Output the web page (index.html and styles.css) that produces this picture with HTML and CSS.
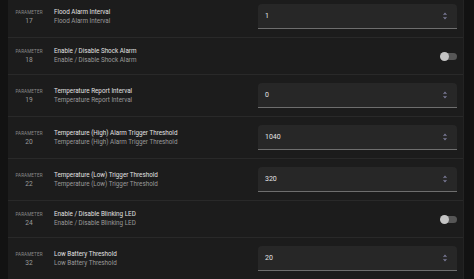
FILE: index.html
```html
<!DOCTYPE html>
<html lang="en">
<head>
  <meta charset="UTF-8" />
  <meta name="viewport" content="width=device-width, initial-scale=1.0" />
  <title>Configuration Parameters</title>
  <link rel="stylesheet" href="styles.css">
</head>
<body>
  <div class="panel">
    <div class="row">
      <div class="param"><span class="param-label">PARAMETER</span><span class="param-num">17</span></div>
      <div class="info"><div class="title">Flood Alarm Interval</div><div class="desc">Flood Alarm Interval</div></div>
      <div class="control">
        <div class="field"><span class="value">1</span>
          <svg class="spin" viewBox="0 0 4 8"><path d="M0.6 3 L2 1.4 L3.4 3 M0.6 5 L2 6.6 L3.4 5" /></svg>
        </div>
      </div>
    </div>
    <div class="row">
      <div class="param"><span class="param-label">PARAMETER</span><span class="param-num">18</span></div>
      <div class="info"><div class="title">Enable / Disable Shock Alarm</div><div class="desc">Enable / Disable Shock Alarm</div></div>
      <div class="control toggle-wrap"><span class="toggle"><span class="knob"></span></span></div>
    </div>
    <div class="row">
      <div class="param"><span class="param-label">PARAMETER</span><span class="param-num">19</span></div>
      <div class="info"><div class="title">Temperature Report Interval</div><div class="desc">Temperature Report Interval</div></div>
      <div class="control">
        <div class="field"><span class="value">0</span>
          <svg class="spin" viewBox="0 0 4 8"><path d="M0.6 3 L2 1.4 L3.4 3 M0.6 5 L2 6.6 L3.4 5" /></svg>
        </div>
      </div>
    </div>
    <div class="row">
      <div class="param"><span class="param-label">PARAMETER</span><span class="param-num">20</span></div>
      <div class="info"><div class="title">Temperature (High) Alarm Trigger Threshold</div><div class="desc">Temperature (High) Alarm Trigger Threshold</div></div>
      <div class="control">
        <div class="field"><span class="value">1040</span>
          <svg class="spin" viewBox="0 0 4 8"><path d="M0.6 3 L2 1.4 L3.4 3 M0.6 5 L2 6.6 L3.4 5" /></svg>
        </div>
      </div>
    </div>
    <div class="row">
      <div class="param"><span class="param-label">PARAMETER</span><span class="param-num">22</span></div>
      <div class="info"><div class="title">Temperature (Low) Trigger Threshold</div><div class="desc">Temperature (Low) Trigger Threshold</div></div>
      <div class="control">
        <div class="field"><span class="value">320</span>
          <svg class="spin" viewBox="0 0 4 8"><path d="M0.6 3 L2 1.4 L3.4 3 M0.6 5 L2 6.6 L3.4 5" /></svg>
        </div>
      </div>
    </div>
    <div class="row">
      <div class="param"><span class="param-label">PARAMETER</span><span class="param-num">24</span></div>
      <div class="info"><div class="title">Enable / Disable Blinking LED</div><div class="desc">Enable / Disable Blinking LED</div></div>
      <div class="control toggle-wrap"><span class="toggle"><span class="knob"></span></span></div>
    </div>
    <div class="row">
      <div class="param"><span class="param-label">PARAMETER</span><span class="param-num">32</span></div>
      <div class="info"><div class="title">Low Battery Threshold</div><div class="desc">Low Battery Threshold</div></div>
      <div class="control">
        <div class="field"><span class="value">20</span>
          <svg class="spin" viewBox="0 0 4 8"><path d="M0.6 3 L2 1.4 L3.4 3 M0.6 5 L2 6.6 L3.4 5" /></svg>
        </div>
      </div>
    </div>
  </div>
</body>
</html>
```

FILE: styles.css
```css
html, body { margin: 0; padding: 0; height: 100%; overflow: hidden; }
body { background: #121212; font-family: Roboto, "Liberation Sans", sans-serif; }
.panel { margin: -4px 10px 0 8px; background: #1c1c1c; border-right: 1px solid #232323; }
.row { display: flex; align-items: center; padding: 9px 0; border-bottom: 1px solid #292929; }
.row:has(.field) { padding: 8px 0; }
.param { width: 42px; display: flex; flex-direction: column; align-items: center; line-height: 9px; }
.param-label { font-size: 4.6px; color: #8a8a8a; letter-spacing: 0.1px; }
.param-num { font-size: 6.6px; color: #9a9a9a; }
.info { flex: 1; margin-left: 4px; line-height: 9px; font-size: 6.3px; }
.title { color: #e2e2e2; }
.desc { color: #9a9a9a; }
.control { width: 199px; margin-right: 6px; display: flex; }
.toggle-wrap { justify-content: flex-end; }
.field { flex: 1; height: 24px; background: #272727; border-bottom: 1px solid #6e6e6e; border-radius: 4px 4px 0 0; display: flex; align-items: center; justify-content: space-between; padding: 0 10px 0 7px; }
.value { font-size: 7px; color: #e4e4e4; }
.spin { width: 4px; height: 8px; fill: none; stroke: #7e7e9c; stroke-width: 1.1; }
.toggle { position: relative; width: 15px; height: 7px; border-radius: 4px; background: #565656; }
.knob { position: absolute; left: -2px; top: -1px; width: 9px; height: 9px; border-radius: 50%; background: #c4c4c4; }
```
